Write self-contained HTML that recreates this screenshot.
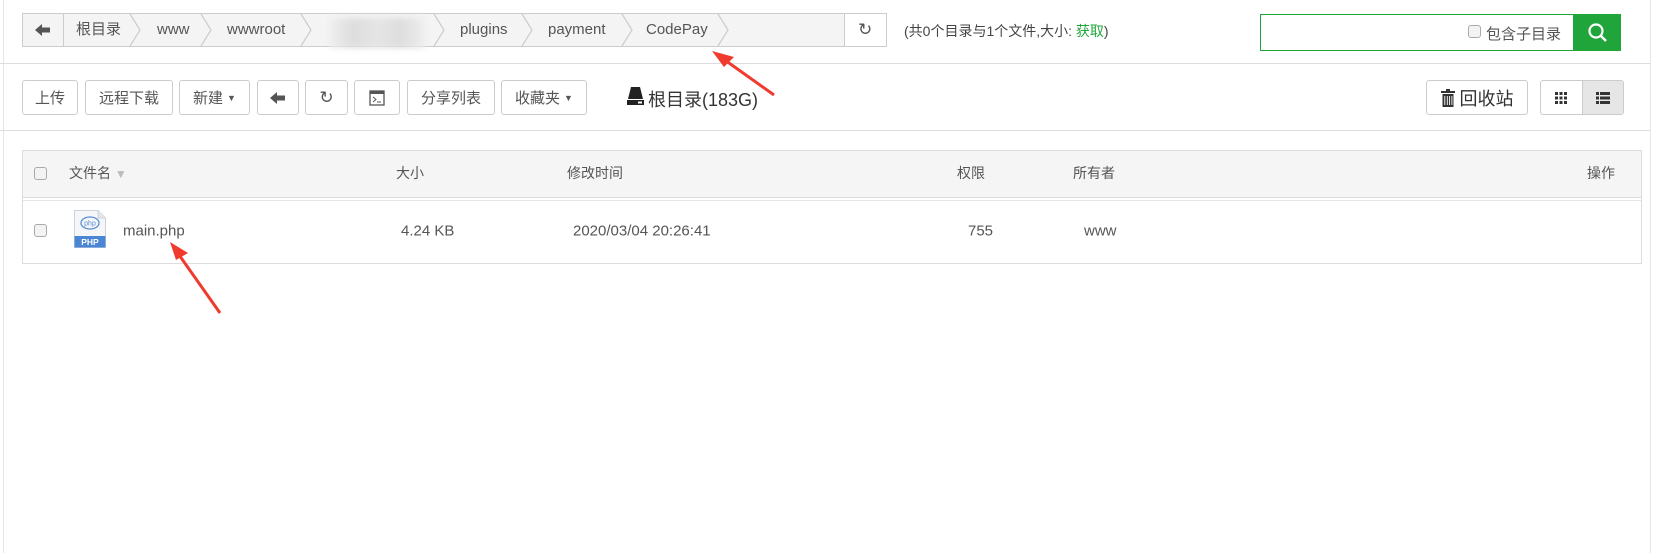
<!DOCTYPE html>
<html><head><meta charset="utf-8"><style>
*{box-sizing:border-box;margin:0;padding:0}
body{width:1662px;height:553px;background:#fff;position:relative;overflow:hidden;font-family:"Liberation Sans","Noto Sans CJK SC",sans-serif;font-size:14px;color:#555}
.a{position:absolute;white-space:nowrap}
.btn{position:absolute;top:80px;height:35px;border:1px solid #ccc;border-radius:3px;background:#fff;display:flex;align-items:center;justify-content:center;color:#555;font-size:15px}
.crumb{position:absolute;top:13px;height:34px;line-height:34px;font-size:15px;color:#555}
.th{position:absolute;top:166px;font-size:14px;color:#555;line-height:1}
.td{position:absolute;top:231px;font-size:15px;color:#555;line-height:1;transform:translateY(-50%)}
.cb{position:absolute;width:13px;height:13px;border:1px solid #aaa;border-radius:3px;background:#f3f3f3}
</style></head><body>
<div class="a" style="left:3px;top:0;width:1px;height:553px;background:#e5e5e5"></div>
<div class="a" style="left:1650px;top:0;width:1px;height:553px;background:#e5e5e5"></div>
<div class="a" style="left:22px;top:13px;width:865px;height:34px;border:1px solid #ccc;background:#f4f4f4"></div>
<div class="a" style="left:22px;top:13px;width:42px;height:34px;border:1px solid #ccc;background:#f4f4f4"></div>
<svg class="a" style="left:35px;top:23px" width="16" height="14" viewBox="0 0 16 14"><path d="M0 7 L7 1 V4.5 H15 V9.5 H7 V13 Z" fill="#555"/></svg>
<svg class="a" style="left:64px;top:13px" width="700" height="34">
<g fill="none" stroke="#ccc" stroke-width="1.2">
<path d="M66 1 L76 17 L66 33"/><path d="M137 1 L147 17 L137 33"/><path d="M237 1 L247 17 L237 33"/><path d="M370 1 L380 17 L370 33"/><path d="M458 1 L468 17 L458 33"/><path d="M558 1 L568 17 L558 33"/><path d="M654 1 L664 17 L654 33"/>
</g></svg>
<div class="crumb" style="left:76px">根目录</div>
<div class="crumb" style="left:157px">www</div>
<div class="crumb" style="left:227px">wwwroot</div>
<div class="a" style="left:330px;top:18px;width:95px;height:30px;background:linear-gradient(90deg,#eee,#ddd,#e5e5e5,#ddd,#eee);filter:blur(3px)"></div>
<div class="crumb" style="left:460px">plugins</div>
<div class="crumb" style="left:548px">payment</div>
<div class="crumb" style="left:646px">CodePay</div>
<div class="a" style="left:844px;top:13px;width:43px;height:34px;border:1px solid #ccc;background:#fff"></div>
<div class="a" style="left:858px;top:20px;font-size:17px;color:#555">&#x21bb;</div>
<div class="a" style="left:904px;top:21px;font-size:14px;color:#444">(共0个目录与1个文件,大小: <span style="color:#20a53a">获取</span>)</div>
<div class="a" style="left:1260px;top:14px;width:314px;height:37px;border:1px solid #20a53a;background:#fff"></div>
<div class="cb" style="left:1468px;top:25px"></div>
<div class="a" style="left:1486px;top:23px;font-size:15px;color:#555">包含子目录</div>
<div class="a" style="left:1574px;top:14px;width:47px;height:37px;background:#20a53a"></div>
<svg class="a" style="left:1587px;top:22px" width="22" height="22" viewBox="0 0 22 22"><circle cx="9" cy="9" r="6.5" fill="none" stroke="#fff" stroke-width="2.2"/><path d="M14 14 L19 19" stroke="#fff" stroke-width="2.5"/></svg>
<div class="a" style="left:0;top:63px;width:1650px;height:1px;background:#ddd"></div>
<div class="btn" style="left:22px;width:56px">上传</div>
<div class="btn" style="left:85px;width:88px">远程下载</div>
<div class="btn" style="left:179px;width:71px">新建 <span style="font-size:9px;margin-left:4px">▼</span></div>
<div class="btn" style="left:257px;width:42px"><svg width="16" height="14" viewBox="0 0 16 14"><path d="M0 7 L7 1 V4.5 H15 V9.5 H7 V13 Z" fill="#555"/></svg></div>
<div class="btn" style="left:305px;width:43px;font-size:17px">&#x21bb;</div>
<div class="btn" style="left:354px;width:46px"><svg width="16" height="16" viewBox="0 0 16 16"><rect x="1" y="1" width="14" height="14" fill="none" stroke="#555" stroke-width="1.3"/><rect x="1" y="1" width="14" height="3" fill="#555"/><path d="M4 7 L7 9.5 L4 12 M8 12 H12" stroke="#555" fill="none"/></svg></div>
<div class="btn" style="left:407px;width:88px">分享列表</div>
<div class="btn" style="left:501px;width:86px">收藏夹 <span style="font-size:9px;margin-left:4px">▼</span></div>
<svg class="a" style="left:627px;top:87px" width="17" height="18" viewBox="0 0 17 18"><path d="M4 0 H13 L16 12 H1 Z" fill="#222"/><rect x="0" y="13" width="17" height="5" fill="#222"/><rect x="11" y="14.5" width="4" height="2" fill="#fff"/></svg>
<div class="a" style="left:648px;top:86px;font-size:18px;color:#333">根目录(183G)</div>
<div class="btn" style="left:1426px;width:102px;font-size:18px;color:#333"><svg width="14" height="18" viewBox="0 0 14 18" style="margin-right:5px"><rect x="0" y="2" width="14" height="2" fill="#333"/><rect x="5" y="0" width="4" height="2" fill="#333"/><path d="M1.5 5 H12.5 V18 H1.5 Z" fill="#333"/><path d="M3.8 7 V16 M6.3 7 V16 M8.6 7 V16 M10.9 7 V16" stroke="#fff" stroke-width="0.9"/></svg>回收站</div>
<div class="btn" style="left:1540px;width:84px;padding:0;justify-content:flex-start;overflow:hidden">
<div style="width:42px;height:100%;display:flex;align-items:center;justify-content:center"><svg width="12" height="12" viewBox="0 0 12 12" fill="#333"><rect x="0" y="0" width="3" height="3"/><rect x="4.5" y="0" width="3" height="3"/><rect x="9" y="0" width="3" height="3"/><rect x="0" y="4.5" width="3" height="3"/><rect x="4.5" y="4.5" width="3" height="3"/><rect x="9" y="4.5" width="3" height="3"/><rect x="0" y="9" width="3" height="3"/><rect x="4.5" y="9" width="3" height="3"/><rect x="9" y="9" width="3" height="3"/></svg></div>
<div style="width:42px;height:100%;background:#e6e6e6;border-left:1px solid #ccc;display:flex;align-items:center;justify-content:center"><svg width="14" height="12" viewBox="0 0 14 12" fill="#333"><rect x="0" y="0" width="3" height="3"/><rect x="4" y="0" width="10" height="3"/><rect x="0" y="4.5" width="3" height="3"/><rect x="4" y="4.5" width="10" height="3"/><rect x="0" y="9" width="3" height="3"/><rect x="4" y="9" width="10" height="3"/></svg></div>
</div>
<div class="a" style="left:0;top:130px;width:1650px;height:1px;background:#ddd"></div>
<div class="a" style="left:22px;top:150px;width:1620px;height:114px;border:1px solid #ddd"></div>
<div class="a" style="left:23px;top:151px;width:1618px;height:47px;background:#f5f5f5;border-bottom:1px solid #ddd"></div>
<div class="a" style="left:23px;top:200px;width:1618px;height:1px;background:#e5e5e5"></div>
<div class="cb" style="left:34px;top:167px"></div>
<div class="th" style="left:69px">文件名 <span style="color:#bbb;font-size:12px">▼</span></div>
<div class="th" style="left:396px">大小</div>
<div class="th" style="left:567px">修改时间</div>
<div class="th" style="left:957px">权限</div>
<div class="th" style="left:1073px">所有者</div>
<div class="th" style="left:1587px">操作</div>
<div class="cb" style="left:34px;top:224px"></div>
<svg class="a" style="left:74px;top:210px" width="32" height="38" viewBox="0 0 32 38"><path d="M0.5 0.5 H24 L31.5 8 V37.5 H0.5 Z" fill="#f4f6f8" stroke="#ccd3db"/><path d="M24 0.5 V8 H31.5" fill="#e3e7ec" stroke="#ccd3db"/><ellipse cx="16" cy="13" rx="9" ry="6" fill="none" stroke="#5b8fd6" stroke-width="1.3"/><text x="16" y="15.5" font-size="7" fill="#5b8fd6" text-anchor="middle" font-family="Liberation Sans">php</text><rect x="0.5" y="26" width="31" height="11.5" fill="#4a86d4"/><text x="16" y="35" font-size="8.5" font-weight="bold" fill="#fff" text-anchor="middle" font-family="Liberation Sans">PHP</text></svg>
<div class="td" style="left:123px">main.php</div>
<div class="td" style="left:401px">4.24 KB</div>
<div class="td" style="left:573px">2020/03/04 20:26:41</div>
<div class="td" style="left:968px">755</div>
<div class="td" style="left:1084px">www</div>
<svg class="a" style="left:0;top:0" width="1662" height="553">
<path d="M774 95 L722 58" stroke="#f03a2e" stroke-width="3"/><path d="M712 51 L734 57 L724 67 Z" fill="#f03a2e"/>
<path d="M220 313 L177 252" stroke="#f03a2e" stroke-width="3"/><path d="M170 242 L188 253 L176 260 Z" fill="#f03a2e"/>
</svg>
</body></html>
